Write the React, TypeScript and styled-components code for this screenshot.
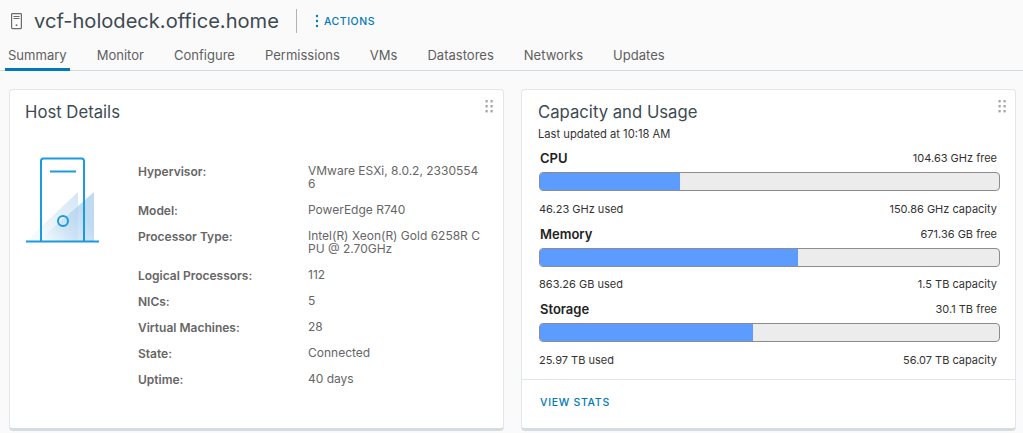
import React from "react";
import styled, { createGlobalStyle } from "styled-components";

const Global = createGlobalStyle`
  html, body { margin: 0; padding: 0; background: #fafafa; }
  body { width: 1023px; height: 433px; overflow: hidden; font-family: Inter, "Open Sans", sans-serif; color: #565656; }
`;

const Page = styled.div`
  display: flex;
  flex-direction: column;
  height: 433px;
  overflow: hidden;
`;
const Header = styled.header`
  display: flex;
  align-items: center;
  height: 41px;
  padding: 1px 0 0 10px;
  box-sizing: border-box;
`;
const Title = styled.h1`
  margin: 0 0 0 11px;
  font-size: 20.1px;
  line-height: 28px;
  font-weight: 400;
  color: #3d4a52;
  white-space: nowrap;
`;
const Divider = styled.div`
  width: 1px;
  height: 24px;
  background: #b3b3b3;
  margin: 0 18px 0 17px;
`;
const Actions = styled.button`
  display: flex;
  align-items: center;
  gap: 5px;
  border: 0;
  padding: 0;
  background: none;
  color: #0079b8;
  font: 500 10.5px Inter, sans-serif;
  letter-spacing: 0.55px;
`;
const Tabs = styled.nav`
  display: flex;
  height: 30px;
  box-sizing: border-box;
  border-bottom: 1px solid #d0dbe2;
  padding-left: 5px;
  gap: 24px;
`;
const Tab = styled.div<{ $active?: boolean }>`
  height: 30px;
  box-sizing: border-box;
  padding: 6px 3px 0;
  font-size: 13.04px;
  line-height: 16px;
  color: #5f5f5f;
  white-space: nowrap;
  border-bottom: 3px solid ${(p) => (p.$active ? "#0079b8" : "transparent")};
`;
const Cards = styled.main`
  display: grid;
  grid-template-columns: 495px 495px;
  gap: 17px;
  padding: 18px 0 0 9px;
`;
const Card = styled.section`
  position: relative;
  height: 342px;
  box-sizing: border-box;
  background: #fff;
  border: 1px solid #e0e6ea;
  border-bottom: 3px solid #d5dde2;
  border-radius: 4px;
  display: flex;
  flex-direction: column;
`;
const Grip = styled.svg<{ $right: number }>`
  position: absolute;
  top: 10px;
  right: ${(p) => p.$right}px;
`;
const CardTitle = styled.h2`
  margin: 0;
  font-size: 16.7px;
  line-height: 22px;
  font-weight: 400;
  color: #3d4a52;
`;
const HostHead = styled.div`
  padding: 11px 0 0 15px;
`;
const HostBody = styled.div`
  display: flex;
  padding: 41px 0 0 15px;
`;
const HostIcon = styled.svg`
  flex: none;
  margin-top: -8px;
`;
const Details = styled.dl`
  margin: 0 0 0 38px;
  display: grid;
  grid-template-columns: 170px 174px;
  row-gap: 13px;
  font-size: 12px;
  line-height: 13px;
`;
const Label = styled.dt`
  font-weight: 600;
  color: #666;
  padding-top: 1px;
  margin-bottom: -1px;
`;
const Value = styled.dd`
  margin: 0;
  color: #666;
  word-break: break-all;
`;
const Usage = styled.div`
  padding: 11px 15px 0 17px;
  flex: 1;
`;
const UsageTitle = styled(CardTitle)`
  margin-left: -1px;
`;
const Updated = styled.div`
  font-size: 11.2px;
  line-height: 14px;
  margin-top: 4px;
  margin-left: -1px;
  color: #333;
`;
const Metric = styled.div`
  margin-top: 8px;
  & + & { margin-top: 9px; }
`;
const MetricHead = styled.div`
  display: flex;
  justify-content: space-between;
  align-items: center;
  height: 18px;
  padding: 0 3px 0 1px;
  color: #333;
  font-size: 11px;
`;
const MetricName = styled.span`
  font-size: 13px;
  font-weight: 600;
  color: #222;
`;
const Bar = styled.div`
  height: 19px;
  margin-top: 5px;
  box-sizing: border-box;
  border: 1px solid #8c8c8c;
  border-radius: 4px;
  background: #ececec;
  overflow: hidden;
`;
const Fill = styled.div`
  height: 100%;
  background: #5c9bff;
`;
const MetricFoot = styled.div`
  display: flex;
  justify-content: space-between;
  margin-top: 10.5px;
  padding-right: 3px;
  font-size: 11px;
  line-height: 14px;
  color: #333;
`;
const CardFooter = styled.div`
  border-top: 1px solid #e0e6ea;
  height: 49px;
  box-sizing: border-box;
  padding: 16px 0 0 18px;
  font-size: 10.5px;
  line-height: 14px;
  font-weight: 500;
  letter-spacing: 0.7px;
  color: #0079b8;
`;

const GripIcon = ({ right }: { right: number }) => (
  <Grip $right={right} width="8" height="14" viewBox="0 0 8 14" fill="#a3a3a3">
    {[1, 6, 11].flatMap((y) =>
      [1.5, 6.5].map((x) => <rect key={`${x}-${y}`} x={x - 1} y={y - 1} width="2.2" height="2.4" />)
    )}
  </Grip>
);

const rows: [string, string][] = [
  ["Hypervisor:", "VMware ESXi, 8.0.2, 23305546"],
  ["Model:", "PowerEdge R740"],
  ["Processor Type:", "Intel(R) Xeon(R) Gold 6258R CPU @ 2.70GHz"],
  ["Logical Processors:", "112"],
  ["NICs:", "5"],
  ["Virtual Machines:", "28"],
  ["State:", "Connected"],
  ["Uptime:", "40 days"],
];

const metrics = [
  { name: "CPU", free: "104.63 GHz free", used: "46.23 GHz used", cap: "150.86 GHz capacity", pct: 30.6 },
  { name: "Memory", free: "671.36 GB free", used: "863.26 GB used", cap: "1.5 TB capacity", pct: 56.2 },
  { name: "Storage", free: "30.1 TB free", used: "25.97 TB used", cap: "56.07 TB capacity", pct: 46.3 },
];

export default function App() {
  return (
    <Page>
      <Global />
      <Header>
        <svg width="13" height="18" viewBox="0 0 13 18" fill="none" stroke="#6b6b6b" strokeWidth="1.2">
          <rect x="1.6" y="1.6" width="9.8" height="15" rx="0.8" />
          <path d="M3.5 4.5h6M3.5 6.5h6" />
          <circle cx="6.5" cy="13.2" r="0.9" fill="#6b6b6b" stroke="none" />
        </svg>
        <Title>vcf-holodeck.office.home</Title>
        <Divider />
        <Actions>
          <svg width="4" height="14" viewBox="0 0 4 14" fill="#0079b8">
            <circle cx="2" cy="2" r="1.2" />
            <circle cx="2" cy="7" r="1.2" />
            <circle cx="2" cy="12" r="1.2" />
          </svg>
          ACTIONS
        </Actions>
      </Header>
      <Tabs>
        <Tab $active>Summary</Tab>
        <Tab>Monitor</Tab>
        <Tab>Configure</Tab>
        <Tab>Permissions</Tab>
        <Tab>VMs</Tab>
        <Tab>Datastores</Tab>
        <Tab>Networks</Tab>
        <Tab>Updates</Tab>
      </Tabs>
      <Cards>
        <Card>
          <GripIcon right={10} />
          <HostHead>
            <CardTitle>Host Details</CardTitle>
          </HostHead>
          <HostBody>
            <HostIcon width="75" height="88" viewBox="0 0 75 88" fill="none">
              <defs>
                <linearGradient id="shadeA" gradientUnits="userSpaceOnUse" x1="15" y1="85" x2="53" y2="40">
                  <stop offset="0" stopColor="#f5fafe" />
                  <stop offset="1" stopColor="#d4e7f6" />
                </linearGradient>
                <linearGradient id="shadeB" gradientUnits="userSpaceOnUse" x1="20" y1="85" x2="60" y2="60">
                  <stop offset="0" stopColor="#a9cfee" stopOpacity="0" />
                  <stop offset="1" stopColor="#a9cfee" stopOpacity="0.75" />
                </linearGradient>
              </defs>
              <path d="M1 85 L53 36 V85 Z" fill="url(#shadeA)" />
              <path d="M69 36 V85 H13 Z" fill="url(#shadeB)" />
              <path d="M16 85 V5 a2.5 2.5 0 0 1 2.5 -2.5 H56.5 a2.5 2.5 0 0 1 2.5 2.5 V85" stroke="#1b9ae0" strokeWidth="2" />
              <path d="M25 15.5 H51" stroke="#1b9ae0" strokeWidth="2" />
              <circle cx="38" cy="65" r="5" stroke="#1b9ae0" strokeWidth="2" fill="none" />
              <path d="M1 85.5 H74" stroke="#1b9ae0" strokeWidth="2" />
            </HostIcon>
            <Details>
              {rows.map(([k, v]) => (
                <React.Fragment key={k}>
                  <Label>{k}</Label>
                  <Value>{v}</Value>
                </React.Fragment>
              ))}
            </Details>
          </HostBody>
        </Card>
        <Card>
          <GripIcon right={9} />
          <Usage>
            <UsageTitle>Capacity and Usage</UsageTitle>
            <Updated>Last updated at 10:18 AM</Updated>
            {metrics.map((m) => (
              <Metric key={m.name}>
                <MetricHead>
                  <MetricName>{m.name}</MetricName>
                  <span>{m.free}</span>
                </MetricHead>
                <Bar>
                  <Fill style={{ width: `${m.pct}%` }} />
                </Bar>
                <MetricFoot>
                  <span>{m.used}</span>
                  <span>{m.cap}</span>
                </MetricFoot>
              </Metric>
            ))}
          </Usage>
          <CardFooter>VIEW STATS</CardFooter>
        </Card>
      </Cards>
    </Page>
  );
}
